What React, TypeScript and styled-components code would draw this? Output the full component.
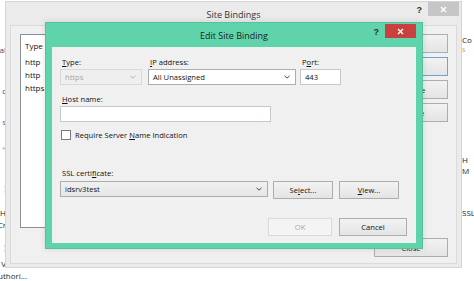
import React from "react";
import styled, { createGlobalStyle } from "styled-components";

const GlobalStyle = createGlobalStyle`
  html, body {
    margin: 0;
    padding: 0;
    background: #ffffff;
  }
  body {
    width: 474px;
    height: 281px;
    overflow: hidden;
    font-family: "Open Sans", "Noto Sans", sans-serif;
    font-size: 7.6px;
    color: #111111;
  }
`;

const Chevron: React.FC<{ disabled?: boolean }> = ({ disabled }) => (
  <svg width="6" height="4" viewBox="0 0 6 4">
    <path
      d="M0.5 0.8 L3 3.2 L5.5 0.8"
      fill="none"
      stroke={disabled ? "#b4b4b4" : "#4a4a4a"}
      strokeWidth="1"
    />
  </svg>
);

const CloseGlyph: React.FC = () => (
  <svg width="7" height="7" viewBox="0 0 7 7">
    <path d="M1 1 L6 6 M6 1 L1 6" stroke="#ffffff" strokeWidth="1.4" />
  </svg>
);

const leftCrumbs = [
  { text: "al", top: 45, color: "#4b3d75" },
  { text: "c", top: 86, color: "#4b3d75" },
  { text: "s", top: 117, color: "#3b6fb6" },
  { text: "+", top: 143, color: "#9aa6b8" },
  { text: "(", top: 183, color: "#b9b9b9" },
  { text: "H", top: 208, color: "#1e1e1e" },
  { text: "Cr", top: 220, color: "#1e1e1e" },
  { text: "(", top: 242, color: "#9a9a9a" },
  { text: "V", top: 259, color: "#1e1e1e" },
];

const rightCrumbs = [
  { text: "Co", top: 35, color: "#1e1e1e", size: 8 },
  { text: "S", top: 45, color: "#d08a2a", size: 6 },
  { text: "H", top: 155, color: "#1e1e1e", size: 8 },
  { text: "M", top: 166, color: "#1e1e1e", size: 8 },
  { text: "SSL", top: 208, color: "#1e1e1e", size: 8 },
];

export default function App() {
  return (
    <>
      <GlobalStyle />
      <Desktop>
        <Backdrop>
          <LeftStrip>
            {leftCrumbs.map((c, i) => (
              <Crumb key={i} $top={c.top} $color={c.color} $size={8}>
                {c.text}
              </Crumb>
            ))}
          </LeftStrip>
          <RightStrip>
            {rightCrumbs.map((c, i) => (
              <Crumb key={i} $top={c.top} $color={c.color} $size={c.size}>
                {c.text}
              </Crumb>
            ))}
          </RightStrip>
          <Footnote>uthori...</Footnote>
        </Backdrop>

        <BindingsWindow>
          <TitleBar $height={23}>
            <TitleText $color="#333333">Site Bindings</TitleText>
            <Caption $top={1} $right={3}>
              <HelpMark>?</HelpMark>
              <CaptionClose $active={false}>
                <CloseGlyph />
              </CaptionClose>
            </Caption>
          </TitleBar>
          <BindingsClient>
            <BindingsBody>
              <ListBox>
                <ListHeader>
                  <HeaderCell>Type</HeaderCell>
                  <HeaderCell>Host Name</HeaderCell>
                  <HeaderCell>Port</HeaderCell>
                </ListHeader>
                {["http", "http", "https"].map((t, i) => (
                  <ListRow key={i}>
                    <RowCell>{t}</RowCell>
                  </ListRow>
                ))}
              </ListBox>
              <ButtonColumn>
                <SideButton>Add...</SideButton>
                <SideButton $default>Edit...</SideButton>
                <SideButton>Remove</SideButton>
                <SideButton>Browse</SideButton>
              </ButtonColumn>
            </BindingsBody>
            <BindingsFooter>
              <SideButton>Close</SideButton>
            </BindingsFooter>
          </BindingsClient>
        </BindingsWindow>

        <EditWindow>
          <TitleBar $height={24}>
            <TitleText $color="#222222">Edit Site Binding</TitleText>
            <Caption $top={2} $right={5}>
              <HelpMark>?</HelpMark>
              <CaptionClose $active>
                <CloseGlyph />
              </CaptionClose>
            </Caption>
          </TitleBar>
          <EditClient>
            <TopRow>
              <Field $width={82}>
                <Label>
                  <u>T</u>ype:
                </Label>
                <Combo $disabled>
                  <span>https</span>
                  <Chevron disabled />
                </Combo>
              </Field>
              <Field $width={148}>
                <Label>
                  <u>I</u>P address:
                </Label>
                <Combo $editable>
                  <span>All Unassigned</span>
                  <Chevron />
                </Combo>
              </Field>
              <Field $width={41}>
                <Label>
                  P<u>o</u>rt:
                </Label>
                <TextBox>443</TextBox>
              </Field>
            </TopRow>

            <HostField $width={211}>
              <Label>
                <u>H</u>ost name:
              </Label>
              <TextBox />
            </HostField>

            <CheckRow>
              <CheckBox />
              <span>
                Require Server <u>N</u>ame Indication
              </span>
            </CheckRow>

            <CertField>
              <Label>
                SSL certi<u>f</u>icate:
              </Label>
              <CertRow>
                <Combo $width={208}>
                  <span>idsrv3test</span>
                  <Chevron />
                </Combo>
                <PushButton $width={60}>
                  Se<u>l</u>ect...
                </PushButton>
                <PushButton $width={60}>
                  <u>V</u>iew...
                </PushButton>
              </CertRow>
            </CertField>

            <DialogFooter>
              <PushButton $width={64} $disabled>
                OK
              </PushButton>
              <PushButton $width={68}>Cancel</PushButton>
            </DialogFooter>
          </EditClient>
        </EditWindow>
      </Desktop>
    </>
  );
}

const Desktop = styled.div`
  position: relative;
  width: 474px;
  height: 281px;
  overflow: hidden;
  background: #ffffff;
`;

const Backdrop = styled.div`
  position: relative;
  width: 100%;
  height: 100%;
  display: flex;
  justify-content: space-between;
`;

const LeftStrip = styled.div`
  position: relative;
  width: 6px;
  height: 100%;
  overflow: hidden;
  direction: rtl;
`;

const RightStrip = styled.div`
  position: relative;
  width: 12px;
  height: 100%;
  overflow: hidden;
`;

const Crumb = styled.span<{ $top: number; $color: string; $size: number }>`
  position: absolute;
  top: ${(p) => p.$top}px;
  left: 0;
  right: 0;
  white-space: nowrap;
  font-size: ${(p) => p.$size}px;
  line-height: 10px;
  color: ${(p) => p.$color};
`;

const Footnote = styled.span`
  position: absolute;
  left: -2px;
  top: 271px;
  font-size: 8px;
  line-height: 10px;
  color: #1e1e1e;
`;

const WindowFrame = styled.div`
  position: absolute;
  display: flex;
  flex-direction: column;
  box-sizing: border-box;
`;

const BindingsWindow = styled(WindowFrame)`
  left: 5px;
  top: 1px;
  width: 457px;
  height: 267px;
  background: #ebebeb;
  border: 1px solid #d4d4d4;
  padding: 0 4px 4px 4px;
`;

const EditWindow = styled(WindowFrame)`
  left: 45px;
  top: 22px;
  width: 378px;
  height: 227px;
  background: #5fd3aa;
  border: 1px solid #52c39c;
  padding: 0 6px 5px 6px;
  box-shadow: 0 0 6px rgba(0, 0, 0, 0.12);
`;

const TitleBar = styled.div<{ $height: number }>`
  position: relative;
  flex: 0 0 ${(p) => p.$height}px;
  display: flex;
  align-items: center;
  justify-content: center;
`;

const TitleText = styled.span<{ $color: string }>`
  font-size: 9px;
  color: ${(p) => p.$color};
  margin-top: 1px;
`;

const Caption = styled.div<{ $top: number; $right: number }>`
  position: absolute;
  top: ${(p) => p.$top - 1}px;
  right: ${(p) => p.$right - 5}px;
  display: flex;
  align-items: center;
  gap: 6px;
`;

const HelpMark = styled.span`
  font-family: "Liberation Sans", Arial, sans-serif;
  font-weight: 700;
  font-size: 9px;
  color: #2d2d2d;
  margin-top: 2px;
`;

const CaptionClose = styled.div<{ $active: boolean }>`
  width: 31px;
  height: 14px;
  display: flex;
  align-items: center;
  justify-content: center;
  background: ${(p) => (p.$active ? "#c9403f" : "#c6c6c6")};
`;

const BindingsClient = styled.div`
  flex: 1;
  display: flex;
  flex-direction: column;
  background: #f0f0f0;
  border: 1px solid #dadada;
  padding: 8px 8px 6px 9px;
`;

const BindingsBody = styled.div`
  display: flex;
  gap: 8px;
  height: 194px;
`;

const ListBox = styled.div`
  flex: 1;
  background: #ffffff;
  border: 1px solid #8e8f94;
  display: flex;
  flex-direction: column;
`;

const ListHeader = styled.div`
  display: flex;
  height: 16px;
  align-items: center;
  margin-top: 2px;
  margin-bottom: 2px;
`;

const HeaderCell = styled.span`
  width: 60px;
  padding-left: 4px;
  font-size: 8px;
  color: #111111;
`;

const ListRow = styled.div`
  height: 13px;
  display: flex;
  align-items: center;
  padding-left: 4px;
`;

const RowCell = styled.span`
  font-size: 8px;
`;

const ButtonColumn = styled.div`
  width: 74px;
  display: flex;
  flex-direction: column;
  gap: 4px;
`;

const SideButton = styled.div<{ $default?: boolean }>`
  height: 19px;
  width: 74px;
  box-sizing: border-box;
  display: flex;
  align-items: center;
  justify-content: center;
  background: linear-gradient(#f2f2f2, #e4e4e4);
  border: 1px solid ${(p) => (p.$default ? "#6fa3d8" : "#adadad")};
  font-size: 7.6px;
  color: #111111;
`;

const BindingsFooter = styled.div`
  display: flex;
  justify-content: flex-end;
  margin-top: 10px;
`;

const EditClient = styled.div`
  flex: 1;
  display: flex;
  flex-direction: column;
  background: #f0f0f0;
  padding: 10px 9px 0 8px;
`;

const TopRow = styled.div`
  display: flex;
  gap: 6px;

  & > :last-child {
    margin-left: -2px;
  }
`;

const Field = styled.div<{ $width: number }>`
  width: ${(p) => p.$width}px;
  display: flex;
  flex-direction: column;
  gap: 1px;
`;

const HostField = styled(Field)`
  margin-top: 9px;
`;

const Label = styled.span`
  height: 11px;
  line-height: 11px;
  padding-left: 2px;
  color: #111111;
  white-space: nowrap;
`;

const fieldBase = `
  box-sizing: border-box;
  height: 16px;
  display: flex;
  align-items: center;
  padding: 0 5px 0 4px;
  white-space: nowrap;
`;

const Combo = styled.div<{
  $disabled?: boolean;
  $editable?: boolean;
  $width?: number;
}>`
  ${fieldBase}
  width: ${(p) => (p.$width ? `${p.$width}px` : "100%")};
  justify-content: space-between;
  border: 1px solid ${(p) => (p.$disabled ? "#d9d9d9" : "#acacac")};
  background: ${(p) =>
    p.$disabled
      ? "#efefef"
      : p.$editable
      ? "#ffffff"
      : "linear-gradient(#f0f0f0, #e6e6e6)"};
  color: ${(p) => (p.$disabled ? "#a5a5a5" : "#111111")};
`;

const TextBox = styled.div`
  ${fieldBase}
  width: 100%;
  border: 1px solid #c5c8cf;
  background: #ffffff;
  color: #111111;
`;

const CheckRow = styled.div`
  margin-top: 7px;
  height: 11px;
  display: flex;
  align-items: center;
  gap: 4px;
  padding-left: 1px;
`;

const CheckBox = styled.span`
  width: 10px;
  height: 10px;
  box-sizing: border-box;
  border: 1px solid #7a7a7a;
  background: #ffffff;
`;

const CertField = styled.div`
  margin-top: 28px;
  display: flex;
  flex-direction: column;
  gap: 2px;
`;

const CertRow = styled.div`
  display: flex;
  align-items: flex-start;
  gap: 6px;

  & > :nth-child(2) {
    margin-left: -1px;
  }
`;

const PushButton = styled.div<{ $width: number; $disabled?: boolean }>`
  box-sizing: border-box;
  width: ${(p) => p.$width}px;
  height: 18px;
  display: flex;
  align-items: center;
  justify-content: center;
  border: 1px solid ${(p) => (p.$disabled ? "#dadada" : "#adadad")};
  background: ${(p) =>
    p.$disabled ? "#f4f4f4" : "linear-gradient(#f2f2f2, #e4e4e4)"};
  color: ${(p) => (p.$disabled ? "#a8a8a8" : "#111111")};
`;

const DialogFooter = styled.div`
  margin-top: 19px;
  display: flex;
  justify-content: flex-end;
  gap: 7px;
`;
